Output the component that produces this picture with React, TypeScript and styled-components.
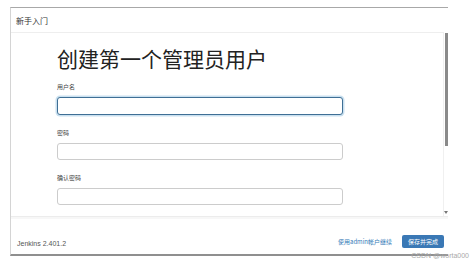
import styled, { createGlobalStyle } from 'styled-components';

const GlobalStyle = createGlobalStyle`
  html, body {
    margin: 0;
    padding: 0;
    background: #ffffff;
  }

  body {
    font-family: 'Liberation Sans', 'Noto Sans CJK SC', sans-serif;
    color: #333333;
  }
`;

const Page = styled.div`
  position: relative;
  width: 474px;
  height: 261px;
  padding: 7px 0 0 10px;
  box-sizing: border-box;
  overflow: hidden;
`;

const Dialog = styled.div`
  display: flex;
  flex-direction: column;
  width: 438px;
  height: 249px;
  box-sizing: border-box;
  border: 1px solid #d4d4d4;
  border-top: 1px solid #a8a8a8;
  border-bottom: 2px solid #8f8f8f;
  border-right: 0;
  background: #ffffff;
`;

const Header = styled.div`
  display: flex;
  align-items: center;
  height: 24px;
  padding-left: 5px;
  margin-right: 4px;
  border-bottom: 1px solid #eeeeee;
  font-family: 'Noto Sans CJK SC', sans-serif;
  font-size: 8px;
  color: #333333;
`;

const Body = styled.div`
  display: flex;
  flex: 1;
  min-height: 0;
`;

const Content = styled.div`
  flex: 1;
  padding: 12px 0 0 46px;
`;

const Title = styled.h1`
  margin: 0 0 12px;
  font-family: 'Noto Sans CJK SC', sans-serif;
  font-size: 21px;
  line-height: 26px;
  font-weight: 400;
  color: #222222;
`;

const Field = styled.div`
  margin-bottom: 14px;
`;

const Label = styled.label`
  display: block;
  margin-bottom: 6px;
  font-family: 'Noto Sans CJK SC', sans-serif;
  font-size: 6px;
  line-height: 8px;
  color: #444444;
`;

const Input = styled.div<{ $focused?: boolean }>`
  width: 286px;
  height: ${(p) => (p.$focused ? '18px' : '17px')};
  box-sizing: border-box;
  border-radius: 3px;
  border: ${(p) => (p.$focused ? '1.5px solid #3f6f95' : '1px solid #cccccc')};
  box-shadow: ${(p) => (p.$focused ? '0 0 0 1.5px #c9e0ef' : 'none')};
  background: #ffffff;
`;

const ScrollTrack = styled.div`
  display: flex;
  flex-direction: column;
  align-items: center;
  justify-content: space-between;
  width: 5px;
  border-left: 1px solid #f0f0f0;
  padding-bottom: 2px;
  box-sizing: border-box;
`;

const ScrollThumb = styled.div`
  width: 3px;
  height: 113px;
  background: #8a8a8a;
`;

const ScrollArrow = styled.div`
  width: 0;
  height: 0;
  border-left: 2px solid transparent;
  border-right: 2px solid transparent;
  border-top: 3px solid #777777;
`;

const Footer = styled.div`
  display: flex;
  align-items: flex-end;
  justify-content: space-between;
  height: 38px;
  padding: 0 4px 6px 6px;
  box-sizing: border-box;
  border-top: 1px solid #ececec;
  box-shadow: inset 0 2px 0 #f7f7f7;
`;

const Version = styled.span`
  font-size: 7px;
  line-height: 9px;
  color: #555555;
`;

const Actions = styled.div`
  display: flex;
  align-items: center;
  gap: 10px;
`;

const Link = styled.a`
  font-family: 'Noto Sans CJK SC', sans-serif;
  font-size: 6px;
  color: #337ab7;
  text-decoration: none;
`;

const PrimaryButton = styled.button`
  height: 13px;
  padding: 0 6px;
  border: 0;
  border-radius: 2px;
  background: #3a78b5;
  color: #ffffff;
  font-family: 'Noto Sans CJK SC', sans-serif;
  font-size: 6px;
  line-height: 13px;
`;

const Watermark = styled.span`
  position: absolute;
  right: 5px;
  bottom: 2px;
  font-size: 7px;
  color: #a9a9a9;
`;

export default function App() {
  return (
    <>
      <GlobalStyle />
      <Page>
        <Dialog>
          <Header>新手入门</Header>
          <Body>
            <Content>
              <Title>创建第一个管理员用户</Title>
              <Field>
                <Label>用户名</Label>
                <Input $focused />
              </Field>
              <Field>
                <Label>密码</Label>
                <Input />
              </Field>
              <Field>
                <Label>确认密码</Label>
                <Input />
              </Field>
            </Content>
            <ScrollTrack>
              <ScrollThumb />
              <ScrollArrow />
            </ScrollTrack>
          </Body>
          <Footer>
            <Version>Jenkins 2.401.2</Version>
            <Actions>
              <Link href="#">使用admin帐户继续</Link>
              <PrimaryButton>保存并完成</PrimaryButton>
            </Actions>
          </Footer>
        </Dialog>
        <Watermark>CSDN @worta000</Watermark>
      </Page>
    </>
  );
}
